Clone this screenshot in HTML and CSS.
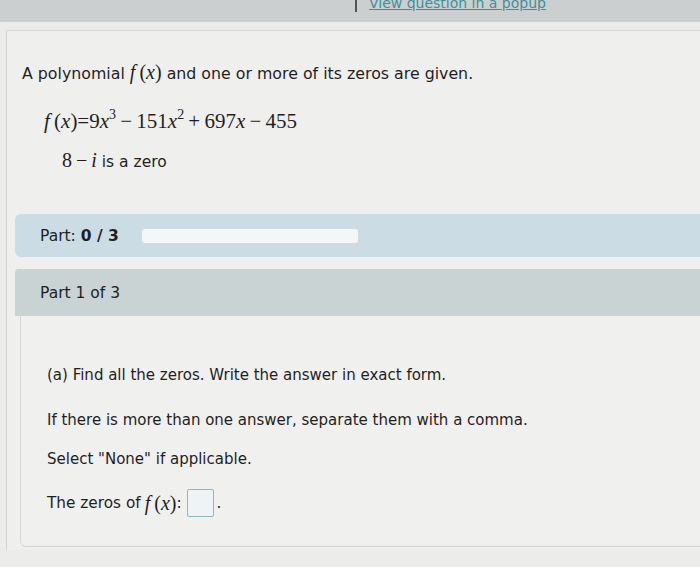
FILE: index.html
```html
<!DOCTYPE html>
<html>
<head>
<meta charset="utf-8">
<link rel="stylesheet" href="styles.css">
</head>
<body>
<div class="topbar">
  <span class="divider"></span>
  <a class="popup" href="#">View question in a popup</a>
</div>
<div class="card">
  <p class="intro">A polynomial <span class="m"><i>f</i>&thinsp;(<i>x</i>)</span> and one or more of its zeros are given.</p>
  <p class="eq"><i>f</i>&thinsp;(<i>x</i>)=9<i>x</i><sup>3</sup>&thinsp;−&thinsp;151<i>x</i><sup>2</sup>&thinsp;+&thinsp;697<i>x</i>&thinsp;−&thinsp;455</p>
  <p class="zero"><span class="m">8&thinsp;−&thinsp;<i>i</i></span> is a zero</p>
  <div class="parts">
    <div class="partbar">
      <span>Part: <b>0 / 3</b></span>
      <span class="progress"></span>
    </div>
    <div class="parthead">Part 1 of 3</div>
    <div class="content">
      <p>(a) Find all the zeros. Write the answer in exact form.</p>
      <p>If there is more than one answer, separate them with a comma.</p>
      <p>Select "None" if applicable.</p>
      <p class="answer">The zeros of <span class="m"><i>f</i>&thinsp;(<i>x</i>)</span>:<span class="box"></span>.</p>
    </div>
  </div>
</div>
</body>
</html>
```

FILE: styles.css
```css
html, body {
  margin: 0;
  padding: 0;
}
body {
  background: #ececeb;
  font-family: "DejaVu Sans", Verdana, sans-serif;
  color: #1f1f1f;
  width: 700px;
  height: 567px;
  overflow: hidden;
}
.topbar {
  height: 22px;
  background: #cbcfd0;
  display: flex;
  align-items: flex-end;
  overflow: hidden;
  padding-left: 355px;
  box-sizing: border-box;
  padding-bottom: 10px;
}
.divider {
  width: 2px;
  height: 12px;
  background: #555;
  margin-right: 12px;
}
.popup {
  color: #3f8f9c;
  font-size: 14px;
  line-height: 18px;
  text-decoration: underline;
}
.card {
  margin: 8px 0 0 6px;
  border-left: 1px solid #d3d3d3;
  border-top: 1px solid #d9d9d9;
  background: #efefee;
  padding-top: 30px;
  height: 520px;
  box-sizing: border-box;
}
p {
  margin: 0;
}
.m {
  font-family: "Liberation Serif", "Times New Roman", serif;
  font-size: 20px;
}
.m i, .eq i {
  font-style: italic;
}
.intro {
  font-size: 15.8px;
  line-height: 22px;
  margin-left: 15px;
}
.eq {
  font-family: "Liberation Serif", "Times New Roman", serif;
  font-size: 21px;
  line-height: 26px;
  margin: 23px 0 0 37px;
}
.eq sup {
  font-size: 14px;
  vertical-align: 9px;
  line-height: 0;
}
.zero {
  font-size: 15.5px;
  line-height: 22px;
  margin: 15px 0 0 55px;
}
.parts {
  margin: 41px 0 0 8px;
}
.partbar {
  height: 43px;
  background: #cbdce5;
  border-radius: 6px 0 0 6px;
  display: flex;
  align-items: center;
  padding-left: 25px;
  font-size: 15.5px;
  gap: 23px;
}
.partbar b {
  font-weight: bold;
}
.progress {
  width: 216px;
  height: 14px;
  background: #f4f6f7;
  border-radius: 3px;
}
.parthead {
  margin-top: 12px;
  height: 47px;
  background: #c9d3d3;
  display: flex;
  align-items: center;
  padding-left: 25px;
  font-size: 15.5px;
  border-radius: 4px 0 0 0;
}
.content {
  margin-left: 5px;
  border-left: 1px solid #d6d6d6;
  border-bottom: 1px solid #d2d2d2;
  border-radius: 0 0 0 6px;
  background: #f0f0ef;
  height: 231px;
  box-sizing: border-box;
  padding: 48px 0 0 26px;
  font-size: 15px;
  line-height: 22px;
}
.content p {
  margin-bottom: 23px;
}
.content p:nth-child(2) {
  margin-bottom: 17px;
}
.content p:nth-child(3) {
  margin-bottom: 19px;
}
.answer {
  display: flex;
  align-items: center;
  font-size: 15.3px;
}
.answer .m {
  margin-left: 4px;
}
.box {
  display: inline-block;
  width: 25px;
  height: 26px;
  border: 1px solid #8fb7c0;
  background: #eef4f5;
  border-radius: 2px;
  margin: 0 3px 0 5px;
}
```
